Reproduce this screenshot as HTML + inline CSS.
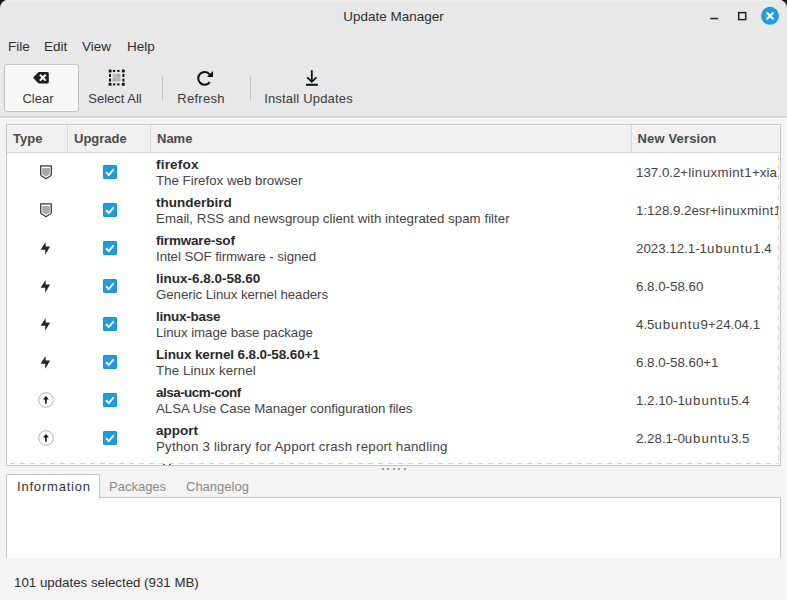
<!DOCTYPE html>
<html><head><meta charset="utf-8">
<style>
*{margin:0;padding:0;box-sizing:border-box}
html,body{width:787px;height:600px;overflow:hidden;background:#141414}
body{font-family:"Liberation Sans",sans-serif;font-size:13px;color:#303030;position:relative}
.win{position:absolute;left:0;top:0;width:787px;height:600px;background:#e8e8e8;border-radius:8px 8px 0 0;overflow:hidden}
.abs{position:absolute;white-space:nowrap}
.title{left:0;width:787px;top:9px;text-align:center;font-size:13.5px;color:#2e2e2e}
.menu{top:39px;font-size:13.5px;color:#2e2e2e}
.tb{top:58px;left:0;width:787px;height:60px;background:#e8e8e8;border-bottom:2px solid #d5d5d5}
.btn{position:absolute;top:6px;height:48px;text-align:center;font-size:13px;color:#3a3a3a}
.btn svg{position:absolute;left:50%;margin-left:-10px;top:4px}
.lbl{position:absolute;left:0;right:0;top:27px}
.sep{position:absolute;top:18px;width:1px;height:25px;background:#c4c4c4}
.main{position:absolute;left:0;top:118px;width:787px;height:482px;background:#f3f3f3;border-top:1px solid #fbfbfb}
.frame{position:absolute;left:6px;top:5px;width:775px;height:342px;border:1px solid #c6c6c6;background:#fff;overflow:hidden}
.hdr{position:absolute;left:0;top:0;width:773px;height:28px;background:#f0f0f0;border-bottom:1px solid #d8d8d8;border-top:1px solid #fafafa}
.hc{position:absolute;top:-1px;height:27px;line-height:28px;font-weight:bold;font-size:13px;color:#4a4a4a;padding-left:6px;border-right:1px solid #d8d8d8}
.row{position:absolute;left:0;width:773px;height:38px}
.ic{position:absolute;left:29px;top:9px}
.nm{position:absolute;left:149px;top:4px;font-weight:bold;font-size:13.5px;color:#2a2a2a;white-space:nowrap}
.ds{position:absolute;left:149px;top:20px;font-size:13.3px;color:#444;white-space:nowrap}
.ver{position:absolute;left:629px;top:12px;width:142px;overflow:hidden;font-size:13.3px;color:#444;white-space:nowrap}
.u{letter-spacing:0.9px}.l{letter-spacing:0.4px}
.cb{position:absolute;left:96px;top:12px;width:14px;height:14px;border-radius:2px;background:#209bdd;box-shadow:inset 0 0 0 1px #1993d6}
.cb svg{position:absolute;left:0;top:0}
.dashh{position:absolute;left:3px;top:338px;width:769px;height:1px;background:repeating-linear-gradient(90deg,#cfcfcf 0 5px,transparent 5px 9.95px)}
.dashv{position:absolute;left:771px;top:30px;width:1px;height:308px;background:repeating-linear-gradient(180deg,#cfcfcf 0 5px,transparent 5px 10px)}
.tab{position:absolute;top:355px;height:25px;font-size:13px;line-height:26px}
.info{position:absolute;left:6px;top:378px;width:775px;height:61px;background:#fff;border:1px solid #c6c6c6;border-bottom:none}
.status{left:14px;top:456px;font-size:13.3px;color:#2e2e2e}
</style></head><body>
<div class="win">
  <div class="abs" style="left:0;top:0;width:787px;height:1px;background:#eeeeee"></div>
  <div class="abs title">Update Manager</div>
  <svg class="abs" style="left:700px;top:0" width="87" height="32" viewBox="0 0 87 32">
    <rect x="10.3" y="17.8" width="7.8" height="1.5" fill="#222"/>
    <rect x="38.7" y="12.6" width="7" height="7" fill="none" stroke="#222" stroke-width="1.5"/>
    <circle cx="70" cy="15.8" r="9" fill="#249ddd"/>
    <path d="M66.6 12.4 L73.4 19.2 M73.4 12.4 L66.6 19.2" stroke="#fff" stroke-width="2.1"/>
  </svg>
  <div class="abs menu" style="left:8px">File</div>
  <div class="abs menu" style="left:44px">Edit</div>
  <div class="abs menu" style="left:82px">View</div>
  <div class="abs menu" style="left:127px">Help</div>

  <div class="abs tb">
    <div class="btn" style="left:4px;width:75px;background:#f7f7f7;border:1px solid #c3c3c3;border-radius:3px;box-shadow:inset 0 1px #fff">
      <div class="lbl" style="left:-7px;top:26px">Clear</div></div>
    <div class="btn" style="left:84px;width:62px">
      <div class="lbl">Select All</div></div>
    <div class="sep" style="left:162px"></div>
    <div class="btn" style="left:170px;width:62px">
      <div class="lbl" style="letter-spacing:0.3px">Refresh</div></div>
    <div class="sep" style="left:250px"></div>
    <div class="btn" style="left:260px;width:98px">
      <div class="lbl" style="letter-spacing:0.18px;left:-1px">Install Updates</div></div>
  </div>
  <svg class="abs" style="left:0;top:0" width="400" height="100" viewBox="0 0 400 100">
    <path d="M38.6 72 H47.2 Q48.8 72 48.8 73.6 V81.9 Q48.8 83.5 47.2 83.5 H38.6 L33 77.75 Z" fill="#1e1e1e"/>
    <path d="M39.9 74.8 L45.7 80.6 M45.7 74.8 L39.9 80.6" stroke="#fff" stroke-width="2"/>
    <g fill="#111">
      <rect x="108.7" y="69.6" width="2.8" height="2.8"/><rect x="121.9" y="69.6" width="2.8" height="2.8"/>
      <rect x="108.7" y="82.9" width="2.8" height="2.8"/><rect x="121.9" y="82.9" width="2.8" height="2.8"/>
      <rect x="112.9" y="69.9" width="2.3" height="2"/><rect x="117.2" y="69.9" width="2.3" height="2"/>
      <rect x="112.9" y="83.4" width="2.3" height="2"/><rect x="117.2" y="83.4" width="2.3" height="2"/>
      <rect x="109" y="73.9" width="2" height="3"/><rect x="109" y="78.6" width="2" height="3"/>
      <rect x="122.4" y="73.9" width="2" height="3"/><rect x="122.4" y="78.6" width="2" height="3"/>
    </g>
    <rect x="112.6" y="73.8" width="3.9" height="3.8" fill="#bdbdbd"/><rect x="116.5" y="73.8" width="3.9" height="3.8" fill="#a9a9a9"/>
    <rect x="112.6" y="77.6" width="3.9" height="3.8" fill="#aaaaaa"/><rect x="116.5" y="77.6" width="3.9" height="3.8" fill="#b4b4b4"/>
    <path d="M209.6 74.3 A6.4 6.4 0 1 0 209.8 82.1" fill="none" stroke="#111" stroke-width="2.1"/>
    <path d="M206.9 77 H213 V70.9 Z" fill="#111"/>
    <path d="M311.8 70.2 V82" stroke="#111" stroke-width="1.8"/><path d="M307.2 77.3 L311.8 81.8 L316.4 77.3" fill="none" stroke="#111" stroke-width="1.8"/><rect x="306" y="83.8" width="11.8" height="2" fill="#111"/>
  </svg>

  <div class="main">
    <div class="frame">
      <div class="hdr">
        <div class="hc" style="left:0;width:61px">Type</div>
        <div class="hc" style="left:61px;width:83px">Upgrade</div>
        <div class="hc" style="left:144px;width:481px">Name</div>
        <div class="hc" style="left:625px;width:148px;border-right:none;padding-left:5.5px;letter-spacing:0.15px">New Version</div>
      </div>
<div class="row" style="top:28px"><svg class="ic" width="20" height="20" viewBox="0 0 20 20"><path d="M4.7 3.9 H15.3 V12.6 Q15.3 13.3 14.6 13.8 L10 16.7 L5.4 13.8 Q4.7 13.3 4.7 12.6 Z" fill="#fff" stroke="#3a3a3a" stroke-width="1.3" stroke-linejoin="round"/><path d="M6.2 5.9 H13.8 V12.2 L10 14.7 L6.2 12.2 Z" fill="#a8a8a8"/></svg><div class="cb"><svg width="14" height="14" viewBox="0 0 14 14"><path d="M3 7.3 L5.8 10 L10.6 4.4" fill="none" stroke="#fff" stroke-width="1.9"/></svg></div><div class="nm" style="letter-spacing:0.200px">firefox</div><div class="ds">The Firefox web browser</div><div class="ver">137.0.2+<span class="l">linuxmint1</span>+xia</div></div>
<div class="row" style="top:66px"><svg class="ic" width="20" height="20" viewBox="0 0 20 20"><path d="M4.7 3.9 H15.3 V12.6 Q15.3 13.3 14.6 13.8 L10 16.7 L5.4 13.8 Q4.7 13.3 4.7 12.6 Z" fill="#fff" stroke="#3a3a3a" stroke-width="1.3" stroke-linejoin="round"/><path d="M6.2 5.9 H13.8 V12.2 L10 14.7 L6.2 12.2 Z" fill="#a8a8a8"/></svg><div class="cb"><svg width="14" height="14" viewBox="0 0 14 14"><path d="M3 7.3 L5.8 10 L10.6 4.4" fill="none" stroke="#fff" stroke-width="1.9"/></svg></div><div class="nm">thunderbird</div><div class="ds" style="letter-spacing:0.019px">Email, RSS and newsgroup client with integrated spam filter</div><div class="ver">1:128.9.2esr+<span class="l">linuxmint1</span>+xia</div></div>
<div class="row" style="top:104px"><svg class="ic" width="20" height="20" viewBox="0 0 20 20"><path d="M9.6 4.1 L4.6 11.8 H9.2 V16.7 L14.1 8.4 H9.7 Z" fill="#262626"/></svg><div class="cb"><svg width="14" height="14" viewBox="0 0 14 14"><path d="M3 7.3 L5.8 10 L10.6 4.4" fill="none" stroke="#fff" stroke-width="1.9"/></svg></div><div class="nm" style="letter-spacing:-0.191px">firmware-sof</div><div class="ds" style="letter-spacing:-0.069px">Intel SOF firmware - signed</div><div class="ver">2023.12.1-1<span class="u">ubuntu</span>1.4</div></div>
<div class="row" style="top:142px"><svg class="ic" width="20" height="20" viewBox="0 0 20 20"><path d="M9.6 4.1 L4.6 11.8 H9.2 V16.7 L14.1 8.4 H9.7 Z" fill="#262626"/></svg><div class="cb"><svg width="14" height="14" viewBox="0 0 14 14"><path d="M3 7.3 L5.8 10 L10.6 4.4" fill="none" stroke="#fff" stroke-width="1.9"/></svg></div><div class="nm">linux-6.8.0-58.60</div><div class="ds" style="letter-spacing:-0.059px">Generic Linux kernel headers</div><div class="ver">6.8.0-58.60</div></div>
<div class="row" style="top:180px"><svg class="ic" width="20" height="20" viewBox="0 0 20 20"><path d="M9.6 4.1 L4.6 11.8 H9.2 V16.7 L14.1 8.4 H9.7 Z" fill="#262626"/></svg><div class="cb"><svg width="14" height="14" viewBox="0 0 14 14"><path d="M3 7.3 L5.8 10 L10.6 4.4" fill="none" stroke="#fff" stroke-width="1.9"/></svg></div><div class="nm" style="letter-spacing:-0.256px">linux-base</div><div class="ds" style="letter-spacing:-0.057px">Linux image base package</div><div class="ver">4.5<span class="u">ubuntu</span>9+24.04.1</div></div>
<div class="row" style="top:218px"><svg class="ic" width="20" height="20" viewBox="0 0 20 20"><path d="M9.6 4.1 L4.6 11.8 H9.2 V16.7 L14.1 8.4 H9.7 Z" fill="#262626"/></svg><div class="cb"><svg width="14" height="14" viewBox="0 0 14 14"><path d="M3 7.3 L5.8 10 L10.6 4.4" fill="none" stroke="#fff" stroke-width="1.9"/></svg></div><div class="nm" style="letter-spacing:-0.128px">Linux kernel 6.8.0-58.60+1</div><div class="ds" style="letter-spacing:0.087px">The Linux kernel</div><div class="ver">6.8.0-58.60+1</div></div>
<div class="row" style="top:256px"><svg class="ic" width="20" height="20" viewBox="0 0 20 20"><circle cx="10" cy="10" r="7.3" fill="#fff" stroke="#a6a6a6" stroke-width="0.9"/><path d="M9.9 6 L12.8 9.4 H10.7 V13.7 H9.1 V9.4 H7 Z" fill="#111"/></svg><div class="cb"><svg width="14" height="14" viewBox="0 0 14 14"><path d="M3 7.3 L5.8 10 L10.6 4.4" fill="none" stroke="#fff" stroke-width="1.9"/></svg></div><div class="nm" style="letter-spacing:-0.533px">alsa-ucm-conf</div><div class="ds" style="letter-spacing:-0.055px">ALSA Use Case Manager configuration files</div><div class="ver">1.2.10-1<span class="u">ubuntu</span>5.4</div></div>
<div class="row" style="top:294px"><svg class="ic" width="20" height="20" viewBox="0 0 20 20"><circle cx="10" cy="10" r="7.3" fill="#fff" stroke="#a6a6a6" stroke-width="0.9"/><path d="M9.9 6 L12.8 9.4 H10.7 V13.7 H9.1 V9.4 H7 Z" fill="#111"/></svg><div class="cb"><svg width="14" height="14" viewBox="0 0 14 14"><path d="M3 7.3 L5.8 10 L10.6 4.4" fill="none" stroke="#fff" stroke-width="1.9"/></svg></div><div class="nm">apport</div><div class="ds" style="letter-spacing:0.190px">Python 3 library for Apport crash report handling</div><div class="ver">2.28.1-0<span class="u">ubuntu</span>3.5</div></div>
      <div class="dashh"></div>
      <div style="position:absolute;left:156px;top:339px;width:2px;height:2px;background:#2a2a2a;border-radius:1px"></div><div style="position:absolute;left:162px;top:339px;width:2px;height:2px;background:#2a2a2a;border-radius:1px"></div>
      <div class="dashv"></div>
    </div>
    <div class="tab" style="left:6px;width:94px;background:#fff;border:1px solid #c6c6c6;border-bottom:none;z-index:2;border-radius:2px 2px 0 0;padding-left:10px;letter-spacing:0.8px;line-height:24px;color:#333">Information</div>
    <div class="tab" style="left:109px;color:#8a8a8a">Packages</div>
    <div class="tab" style="left:186px;color:#8a8a8a">Changelog</div>
    <div class="info"></div>
    <div style="position:absolute;left:381.5px;top:349px;width:2px;height:2px;background:#a0a0a0"></div><div style="position:absolute;left:387px;top:349px;width:2px;height:2px;background:#a0a0a0"></div><div style="position:absolute;left:392.5px;top:349px;width:2px;height:2px;background:#a0a0a0"></div><div style="position:absolute;left:398px;top:349px;width:2px;height:2px;background:#a0a0a0"></div><div style="position:absolute;left:403.5px;top:349px;width:2px;height:2px;background:#a0a0a0"></div>
    <div class="abs status">101 updates selected (931 MB)</div>
  </div>
</div>
</body></html>
